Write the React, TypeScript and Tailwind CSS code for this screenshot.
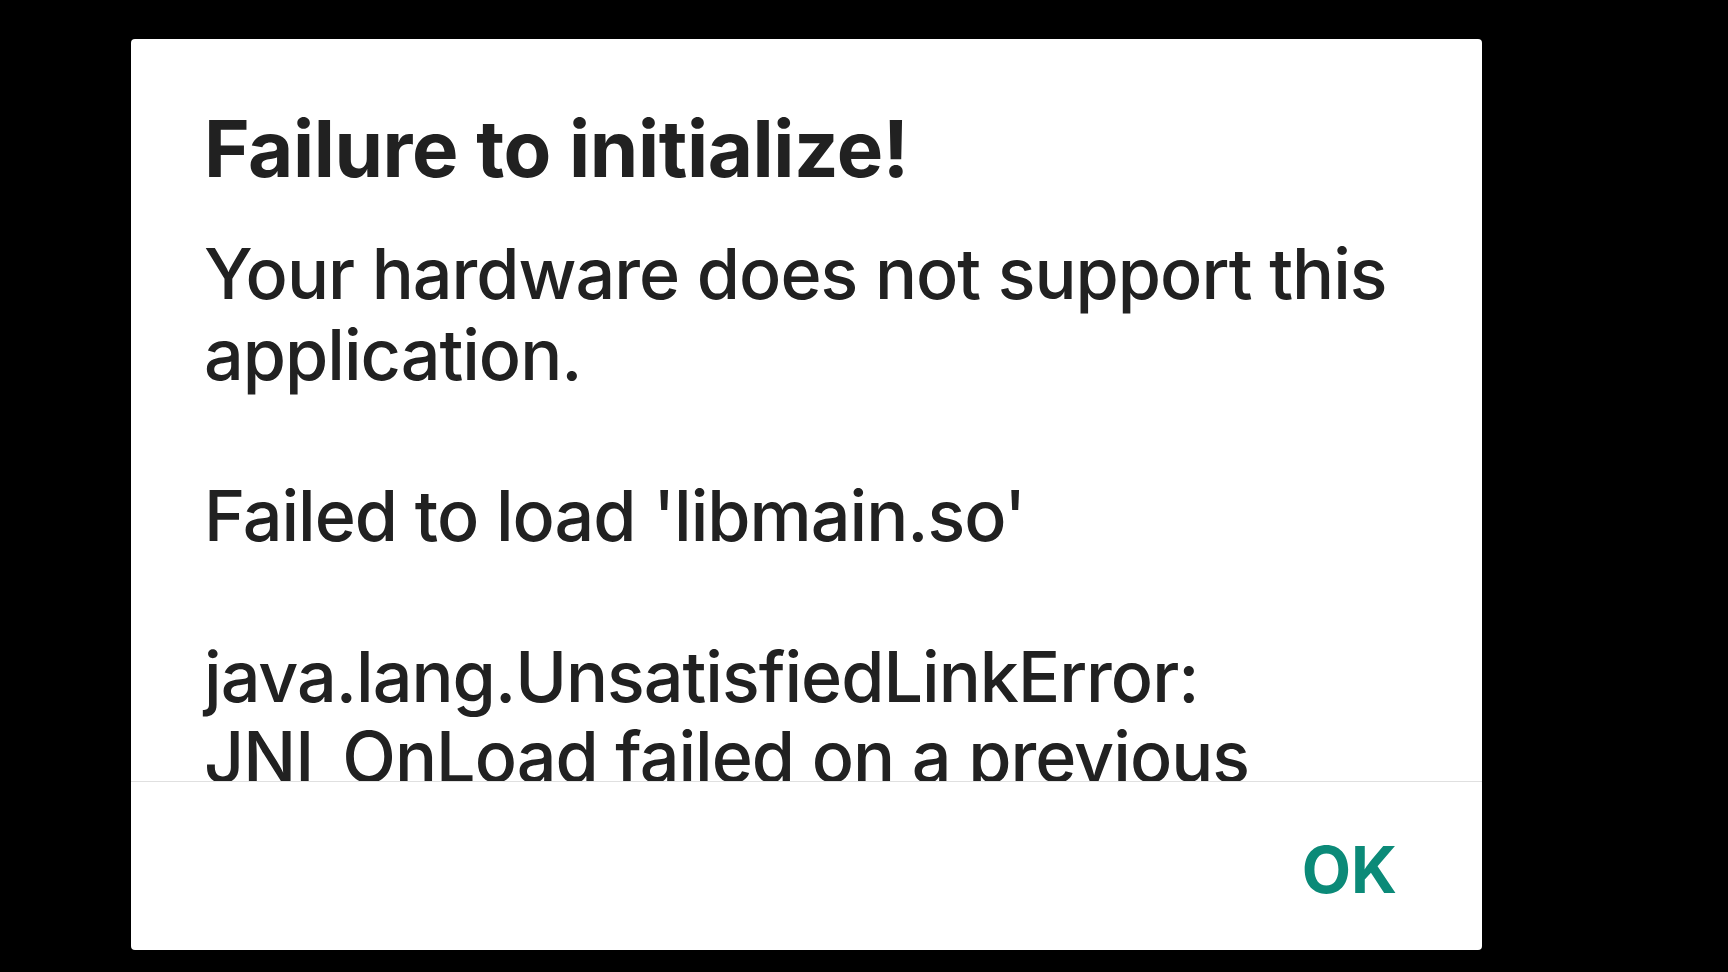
const bodyText =
  "Your hardware does not support this application.\n\nFailed to load 'libmain.so'\n\njava.lang.UnsatisfiedLinkError: JNI_OnLoad failed on a previous attempt.";

const App: React.FC = () => {
  return (
    <div
      className="w-full h-screen bg-black overflow-hidden pt-[39px] pl-[131px] [font-variant-ligatures:none]"
      style={{ fontFamily: "Inter, Lato, sans-serif" }}
    >
      <div className="w-[1351px] h-[911px] bg-white rounded-[4px] flex flex-col overflow-hidden">
        <div className="flex-1 overflow-hidden pl-[73px] pr-[60px] pt-[62px]">
          <h1 className="text-[78px] leading-[96px] font-bold tracking-[-0.4px] text-[#212121]">
            Failure to initialize!
          </h1>
          <p className="mt-[37px] text-[70px] leading-[80.5px] font-medium tracking-[-1px] text-[#212121] whitespace-pre-line">
            {bodyText}
          </p>
        </div>
        <div className="h-[169px] shrink-0 border-t border-[#e0e0e0] flex items-center justify-end pr-[85px] pt-[7px]">
          <button className="text-[64px] leading-none font-bold text-[#0b8a78]">
            OK
          </button>
        </div>
      </div>
    </div>
  );
};

export default App;
